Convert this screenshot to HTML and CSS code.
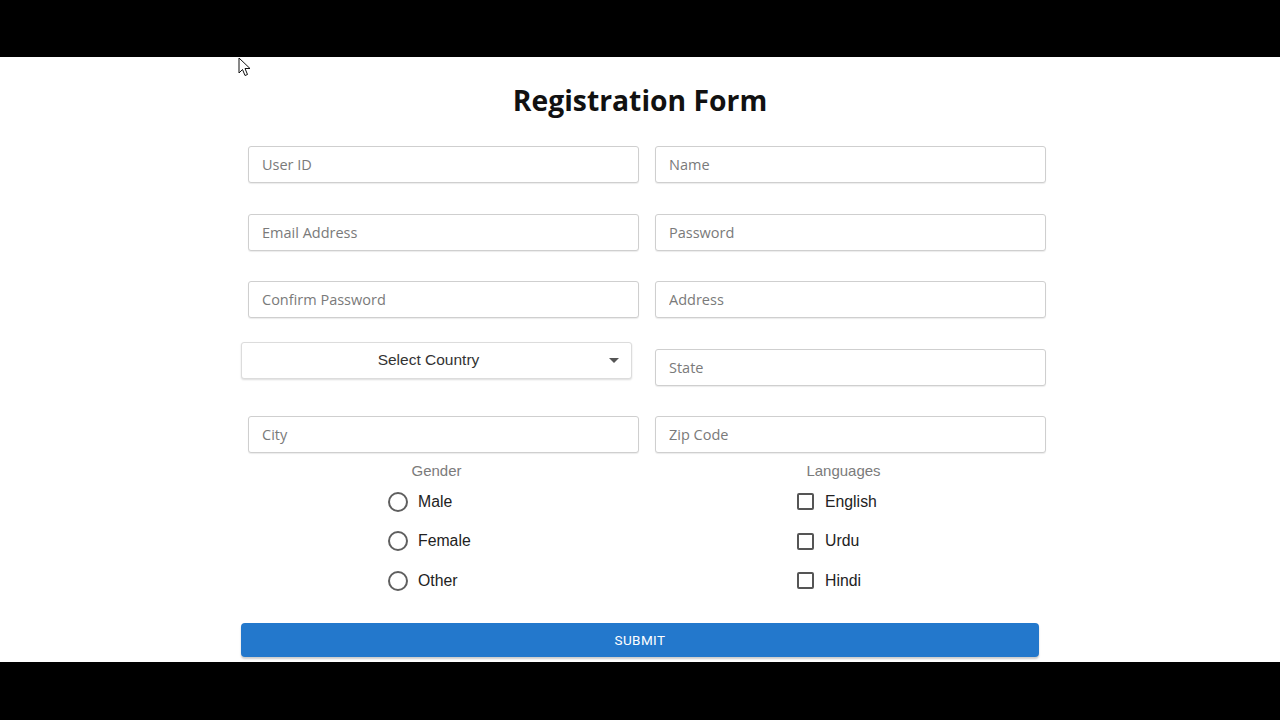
FILE: index.html
```html
<!DOCTYPE html>
<html lang="en">
<head>
<meta charset="utf-8">
<title>Registration Form</title>
<link rel="stylesheet" href="styles.css">
</head>
<body>
<div class="frame">
  <main class="page">
    <h1 class="title">Registration Form</h1>
    <form class="form">
      <div class="fields">
        <input class="field" type="text" placeholder="User ID">
        <input class="field" type="text" placeholder="Name">
        <input class="field" type="email" placeholder="Email Address">
        <input class="field" type="password" placeholder="Password">
        <input class="field" type="password" placeholder="Confirm Password">
        <input class="field" type="text" placeholder="Address">
        <div class="select">
          <span class="select-text">Select Country</span>
          <svg class="select-arrow" width="10" height="5" viewBox="0 0 10 5"><path d="M0 0 L10 0 L5 5 Z" fill="#555"/></svg>
        </div>
        <input class="field" type="text" placeholder="State">
        <input class="field" type="text" placeholder="City">
        <input class="field" type="text" placeholder="Zip Code">
      </div>
      <div class="choices">
        <div class="group">
          <div class="group-label">Gender</div>
          <div class="options">
            <label class="option"><span class="radio"></span>Male</label>
            <label class="option"><span class="radio"></span>Female</label>
            <label class="option"><span class="radio"></span>Other</label>
          </div>
        </div>
        <div class="group">
          <div class="group-label">Languages</div>
          <div class="options options-right">
            <label class="option"><span class="check"></span>English</label>
            <label class="option"><span class="check"></span>Urdu</label>
            <label class="option"><span class="check"></span>Hindi</label>
          </div>
        </div>
      </div>
      <button class="submit" type="button">SUBMIT</button>
    </form>
    <svg class="cursor" width="14" height="20" viewBox="0 0 14 20"><path d="M1 1 L1 16 L4.5 12.5 L7 18.5 L9.5 17.5 L7 11.5 L12 11.5 Z" fill="#fff" stroke="#111" stroke-width="1"/></svg>
  </main>
</div>
</body>
</html>
```
FILE: styles.css
```css
* { box-sizing: border-box; }
html, body { margin: 0; padding: 0; background: #000; }
.frame {
  width: 1280px;
  height: 720px;
  padding-top: 57px;
  background: #000;
}
.page {
  position: relative;
  height: 605px;
  background: #fff;
  overflow: hidden;
  font-family: "Liberation Sans", Arial, sans-serif;
}
.title {
  margin: 0;
  padding-top: 26px;
  font-family: "Open Sans", "Noto Sans", sans-serif;
  font-weight: 700;
  font-size: 28.3px;
  line-height: 34px;
  text-align: center;
  color: #111;
}
.form {
  width: 798px;
  margin: 29px auto 0;
}
.fields {
  display: grid;
  grid-template-columns: 391px 391px;
  grid-auto-rows: 37px;
  column-gap: 16px;
  row-gap: 30.5px;
  margin-left: 7px;
}
.field {
  width: 100%;
  height: 37px;
  border: 1px solid #cfcfcf;
  border-radius: 3px;
  padding: 0 13px;
  font-family: "Open Sans", "Noto Sans", sans-serif;
  font-size: 14.5px;
  color: #333;
  background: #fff;
  box-shadow: 0 1px 1px rgba(0,0,0,0.08);
  outline: none;
}
.field::placeholder { color: #7a7a7a; }
.select {
  display: flex;
  align-items: center;
  width: 391px;
  height: 37px;
  margin: -7px 0 0 -7px;
  border: 1px solid #dcdcdc;
  border-radius: 3px;
  box-shadow: 0 1px 2px rgba(0,0,0,0.14);
  background: #fff;
  padding: 0 12px 0 0;
}
.select-text {
  flex: 1;
  text-align: center;
  font-size: 15.5px;
  color: #333;
  padding-left: 6px;
}
.select-arrow { flex: none; }
.choices {
  display: grid;
  grid-template-columns: 391px 391px;
  column-gap: 16px;
  margin-top: 8px;
}
.group-label {
  text-align: center;
  font-size: 15px;
  line-height: 20px;
  color: #7b7b7b;
}
.options {
  display: flex;
  flex-direction: column;
  padding-left: 147px;
  padding-top: 1px;
}
.options-right { padding-left: 149px; }
.option {
  display: flex;
  align-items: center;
  height: 39.5px;
  font-size: 15.8px;
  color: #222;
}
.radio {
  width: 20px;
  height: 20px;
  border: 2px solid #5f5f5f;
  border-radius: 50%;
  margin-right: 10px;
  flex: none;
}
.check {
  width: 17px;
  height: 17px;
  border: 2px solid #555;
  border-radius: 2px;
  margin-right: 11px;
  flex: none;
}
.submit {
  display: block;
  width: 798px;
  height: 34px;
  margin-top: 22px;
  border: none;
  border-radius: 4px;
  background: #2378cc;
  color: #fff;
  font-family: Roboto, "Liberation Sans", sans-serif;
  font-weight: 400;
  font-size: 13.5px;
  letter-spacing: 0.4px;
  box-shadow: 0 2px 2px rgba(0,0,0,0.2);
}
.cursor {
  position: absolute;
  left: 238px;
  top: 0;
}
```
